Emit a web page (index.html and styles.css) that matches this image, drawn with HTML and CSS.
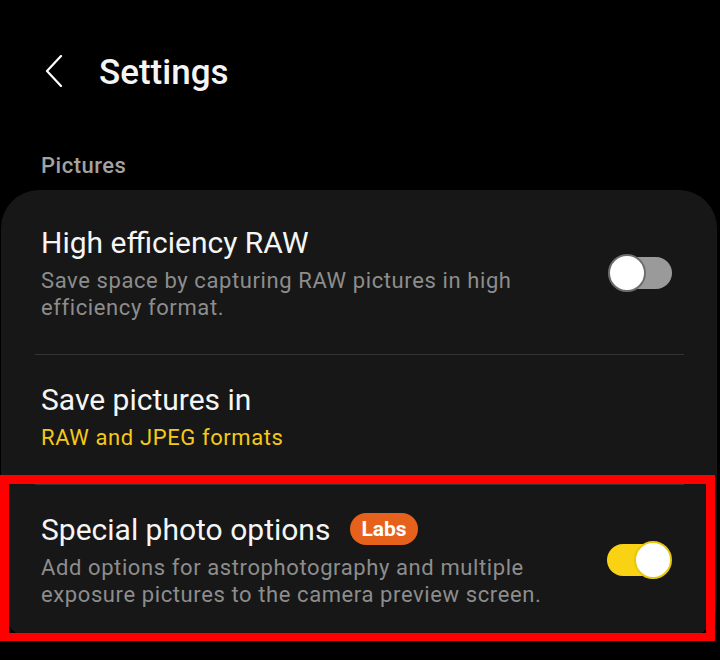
FILE: index.html
```html
<!DOCTYPE html>
<html lang="en">

<head>
    <meta charset="UTF-8">
    <meta name="viewport" content="width=device-width, initial-scale=1.0">
    <title>Settings</title>

    <link rel="stylesheet" href="styles.css">
</head>

<body>

    <header class="top-bar">
        <button class="back-button" aria-label="Back">
            <svg width="18" height="32" viewBox="0 0 18 32">
                <path d="M16 1 L2 16 L16 31" fill="none" stroke="#fff" stroke-width="2.2" stroke-linecap="round" stroke-linejoin="round"/>
            </svg>
        </button>
        <h1 class="page-title">Settings</h1>
    </header>

    <h2 class="group-title">Pictures</h2>

    <section class="settings-card">
        <div class="setting-row">
            <div class="setting-text">
                <div class="setting-title">High efficiency RAW</div>
                <div class="setting-summary">Save space by capturing RAW pictures in high efficiency format.</div>
            </div>
            <span class="switch"></span>
        </div>

        <div class="setting-row">
            <div class="setting-text">
                <div class="setting-title">Save pictures in</div>
                <div class="setting-summary value">RAW and JPEG formats</div>
            </div>
        </div>

        <div class="setting-row highlight">
            <div class="setting-text">
                <div class="setting-title">Special photo options <span class="badge">Labs</span></div>
                <div class="setting-summary">Add options for astrophotography and multiple exposure pictures to the camera preview screen.</div>
            </div>
            <span class="switch on"></span>
        </div>
    </section>

</body>

</html>
```

FILE: styles.css
```css
/* Pantalla de ajustes, tema oscuro */
body {
    margin: 0;
    background-color: #000;
    color: #f5f5f5;
    font-family: Roboto, "Noto Sans", sans-serif;
}

/* Cabecera */
.top-bar {
    display: flex;
    align-items: center;
    gap: 36px;
    height: 40px;
    margin-top: 53px;
    padding-left: 45px;
}

.back-button {
    display: flex;
    padding: 0;
    background: none;
    border: none;
    margin-top: -4px;
}

.page-title {
    margin: 0;
    font-size: 35px;
    font-weight: 500;
    line-height: 40px;
}

.group-title {
    margin: 59px 0 11px 41px;
    font-size: 22px;
    font-weight: 500;
    letter-spacing: 0.5px;
    line-height: 27px;
    color: #a2a2a2;
}

/* Tarjeta con las opciones */
.settings-card {
    width: 716px;
    margin-left: 1px;
    padding-top: 7px;
    background-color: #171717;
    border-radius: 38px;
}

.setting-row {
    display: flex;
    align-items: center;
    gap: 20px;
    padding: 28px 45px 33px 40px;
    position: relative;
}

.setting-row + .setting-row::before {
    content: "";
    position: absolute;
    top: 0;
    left: 34px;
    right: 33px;
    height: 1px;
    background-color: #333;
}

.setting-text {
    flex: 1;
    max-width: 520px;
}

.setting-title {
    display: flex;
    align-items: center;
    font-size: 30px;
    line-height: 36px;
}

.setting-summary {
    margin-top: 6px;
    font-size: 22px;
    letter-spacing: 0.6px;
    line-height: 27px;
    color: #8d8d8d;
}

.setting-summary.value {
    color: #f4c918;
}

.badge {
    margin-left: 20px;
    margin-top: -2px;
    padding: 0 11px;
    height: 32px;
    line-height: 32px;
    border-radius: 16px;
    background-color: #e6611c;
    color: #fff;
    font-size: 21px;
    font-weight: 700;
}

/* Interruptores */
.switch {
    position: relative;
    width: 65px;
    height: 38px;
    margin-left: auto;
    flex-shrink: 0;
}

.switch::before {
    content: "";
    position: absolute;
    top: 3px;
    left: 3px;
    right: 0;
    height: 32px;
    border-radius: 16px;
    background-color: #9a9a9a;
}

.switch::after {
    content: "";
    position: absolute;
    top: 0;
    left: 1px;
    width: 34px;
    height: 34px;
    border: 2px solid #6e6e6e;
    border-radius: 50%;
    background-color: #fff;
}

.switch.on::before {
    left: 0;
    right: 3px;
    background-color: #f9d313;
}

.switch.on::after {
    left: auto;
    right: 0;
    border-color: #e8c80e;
}

/* Marco rojo alrededor de la opción */
.highlight::after {
    content: "";
    position: absolute;
    top: -9px;
    left: -1px;
    width: 715px;
    height: 167px;
    border: 9px solid #ff0000;
    box-sizing: border-box;
}
```
